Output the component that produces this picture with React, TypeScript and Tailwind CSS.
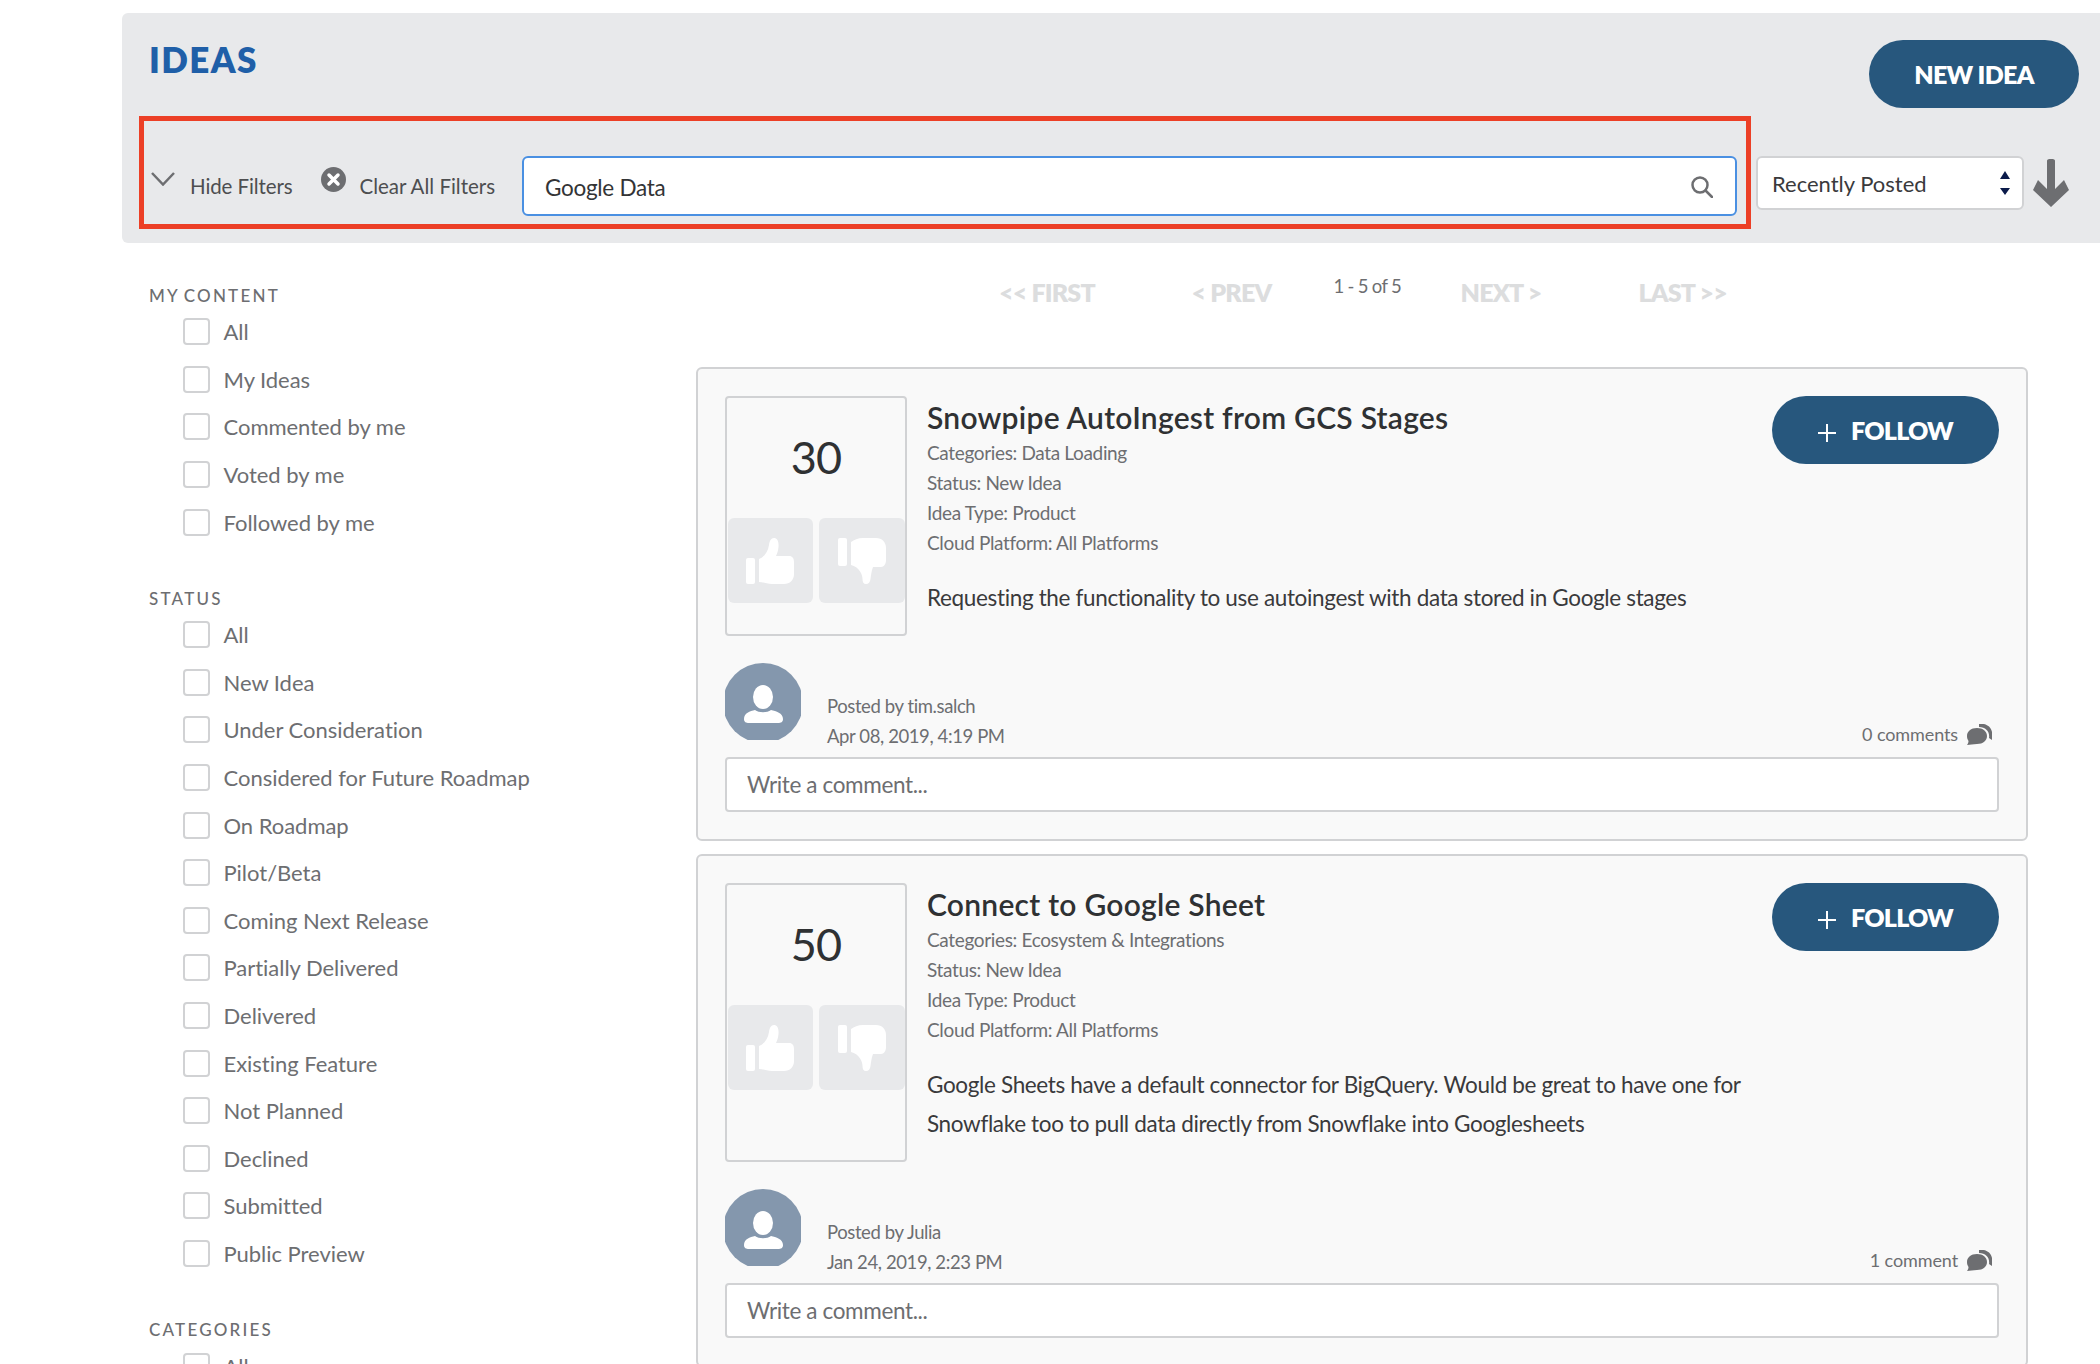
const myContent = ["All", "My Ideas", "Commented by me", "Voted by me", "Followed by me"];

const statuses = [
    "All",
    "New Idea",
    "Under Consideration",
    "Considered for Future Roadmap",
    "On Roadmap",
    "Pilot/Beta",
    "Coming Next Release",
    "Partially Delivered",
    "Delivered",
    "Existing Feature",
    "Not Planned",
    "Declined",
    "Submitted",
    "Public Preview",
];

const ideas = [
    {
        id: 1,
        votes: 30,
        title: "Snowpipe AutoIngest from GCS Stages",
        category: "Data Loading",
        body: ["Requesting the functionality to use autoingest with data stored in Google stages"],
        author: "tim.salch",
        date: "Apr 08, 2019, 4:19 PM",
        comments: "0 comments",
    },
    {
        id: 2,
        votes: 50,
        title: "Connect to Google Sheet",
        category: "Ecosystem & Integrations",
        body: [
            "Google Sheets have a default connector for BigQuery. Would be great to have one for",
            "Snowflake too to pull data directly from Snowflake into Googlesheets",
        ],
        author: "Julia",
        date: "Jan 24, 2019, 2:23 PM",
        comments: "1 comment",
    },
];

function FilterGroup({ title, items }: { title: string; items: string[] }) {
    return (
        <section className="mb-[41px]">
            <h3 className="h-[24px] text-[17px] leading-[24px] tracking-[2.2px] [word-spacing:-2px] text-[#6d6e71] font-medium">{title}</h3>
            {items.map((item) => (
                <label key={item} className="flex h-[47.6px] items-center pl-[34px]">
                    <span className="h-[27px] w-[27px] rounded-[4px] border-2 border-[#d1d2d4] bg-white" />
                    <span className="ml-[13.500px] text-[22px] tracking-[-0.03px] text-[#6d6e71]">{item}</span>
                </label>
            ))}
        </section>
    );
}

function ThumbUp() {
    return (
        <svg viewBox="0 0 48 46" className="h-[46px] w-[48px]" fill="white">
            <rect x="0" y="20" width="9" height="26" rx="2" />
            <path d="M13 21 C18 19 22 14 23 7 C23.500 3 25 0 28 0 C31 0 33 3 32.500 9 C32.200 13 31 16 30 18 L43 18 C46.500 18 48 20.500 48 24 L48 36 C48 42 44 46 38 46 L26 46 C21 46 18 44 13 44 Z" />
        </svg>
    );
}

function ThumbDown() {
    return (
        <svg viewBox="0 0 48 46" className="h-[46px] w-[48px]" fill="white">
            <rect x="0" y="0" width="9" height="28" rx="2" />
            <path d="M13 4 C16 2 20 0 25 0 L38 0 C44 0 48 4 48 10 L48 22 C48 26 46 29 43 29 L35 29 C33.500 33 33 37 32.500 41 C32.200 44 30.500 46 28 46 C25.500 46 24.500 44 24.500 41 C24.500 36 21 29 13 27 Z" />
        </svg>
    );
}

function CommentsIcon() {
    return (
        <svg viewBox="0 0 25 21" className="h-[21px] w-[25px]" fill="#6d6e71">
            <path d="M12 0 C18 -1 24 2 25 8 C25 11 25 13 25 16 L22 14 C23 8 19 3 12 3 Z" />
            <path d="M10 4 C16 4 20 7.500 20 12 C20 16.500 16 20 10 20 C6 20 3 21 0 21 C1 20 1.500 18 1.500 17 C0.500 15.500 0 14 0 12 C0 7.500 4 4 10 4 Z" />
        </svg>
    );
}

function IdeaCard({ idea }: { idea: (typeof ideas)[number] }) {
    return (
        <article className="mb-[13px] rounded-[6px] border-2 border-[#d1d2d4] bg-[#f9f9f9] p-[27px]">
            <div className="flex">
                <div className="flex w-[182px] shrink-0 flex-col rounded-[4px] border-2 border-[#d1d2d4] px-[0.5px]">
                    <div className="flex h-[120px] items-center justify-center text-[45px] tracking-[-0.8px] text-[#2f3133]">{idea.votes}</div>
                    <div className="flex justify-between">
                        <div className="flex h-[85px] w-[85px] items-center justify-center rounded-[6px] bg-[#e8e9eb]">
                            <ThumbUp />
                        </div>
                        <div className="flex h-[85px] w-[86px] items-center justify-center rounded-[6px] bg-[#e8e9eb]">
                            <ThumbDown />
                        </div>
                    </div>
                </div>
                <div className="ml-[20px] flex-1 pb-[19px]">
                    <h2 className="h-[42px] text-[30px] leading-[42px] font-semibold tracking-[0.25px] text-[#2f3133]">{idea.title}</h2>
                    <div className="text-[19px] leading-[30px] tracking-[-0.35px] text-[#6d6e71]">
                        <p>Categories: {idea.category}</p>
                        <p>Status: New Idea</p>
                        <p>Idea Type: Product</p>
                        <p>Cloud Platform: All Platforms</p>
                    </div>
                    <div className="mt-[20px] text-[22.500px] leading-[39px] tracking-[-0.35px] text-[#3a3a3c]">
                        {idea.body.map((line) => (
                            <p key={line}>{line}</p>
                        ))}
                    </div>
                </div>
                <button className="flex h-[68px] w-[227px] shrink-0 items-center justify-center gap-[15px] rounded-full bg-[#27577d] text-[25px] font-extrabold tracking-[-0.8px] text-white">
                    <svg viewBox="0 0 18 18" className="mt-[6px] h-[18px] w-[18px]" stroke="white" strokeWidth="2">
                        <path d="M9 0 V18 M0 9 H18" />
                    </svg>
                    <span className="mt-[2px]">FOLLOW</span>
                </button>
            </div>
            <div className="mt-[27px] flex h-[94px]">
                <svg viewBox="0 0 76 77" className="h-[77px] w-[76px]">
                    <circle cx="38" cy="40" r="40" fill="#8497ad" />
                    <ellipse cx="38" cy="34" rx="10" ry="12" fill="white" />
                    <path d="M19 56 C19 50 25 48 30 47 C34 50 42 50 46 47 C51 48 58 50 58 56 C58 59 56 60 53 60 L24 60 C21 60 19 59 19 56 Z" fill="white" />
                </svg>
                <div className="ml-[26px] mt-[28px] text-[18.500px] leading-[30px] tracking-[-0.4px] text-[#6d6e71]">
                    <p>Posted by {idea.author}</p>
                    <p>{idea.date}</p>
                </div>
                <div className="ml-auto mr-[7px] mt-[59px] flex h-[24px] items-center gap-[9px] text-[18px] tracking-[-0.1px] text-[#6d6e71]">
                    {idea.comments}
                    <CommentsIcon />
                </div>
            </div>
            <div className="flex h-[55px] items-center rounded-[4px] border-2 border-[#d1d2d4] bg-white pl-[20px] text-[22.500px] tracking-[-0.37px] text-[#6d6e71]">
                Write a comment...
            </div>
        </article>
    );
}

export default function App() {
    return (
        <div className="h-[1364px] overflow-hidden bg-white pt-[13px] font-['Lato','Liberation_Sans',sans-serif]">
            <header className="ml-[122px] h-[230px] rounded-l-[6px] bg-[#e8e9eb]">
                <div className="flex h-[103px] items-start justify-between pl-[27px] pr-[21px]">
                    <h1 className="mt-[25px] text-[35px] leading-[42px] font-extrabold tracking-[1.4px] text-[#1f5fa8]">IDEAS</h1>
                    <button className="relative z-10 mt-[27px] h-[68px] w-[210px] rounded-full bg-[#27577d] pt-[2px] text-[25px] font-extrabold tracking-[-0.7px] text-white">
                        NEW IDEA
                    </button>
                </div>
                <div className="flex items-start pl-[17px]">
                    <div className="flex h-[113px] w-[1612px] shrink-0 items-start border-[5px] border-[#ec3f26] text-[20.500px] text-[#4d4e50]">
                        <svg viewBox="0 0 24 14" className="ml-[7px] mt-[51px] h-[14px] w-[24px]" fill="none" stroke="#6d6e71" strokeWidth="2.500">
                            <path d="M1 1 L12 12.500 L23 1" />
                        </svg>
                        <span className="ml-[15px] mt-[50px] leading-[30px] tracking-[-0.1px]">Hide Filters</span>
                        <svg viewBox="0 0 25 25" className="ml-[29px] mt-[46px] h-[25px] w-[25px]">
                            <circle cx="12.500" cy="12.500" r="12.500" fill="#6d6e71" />
                            <path d="M8 8 L17 17 M17 8 L8 17" stroke="white" strokeWidth="3.500" strokeLinecap="round" />
                        </svg>
                        <span className="ml-[13px] mt-[50px] leading-[30px]">Clear All Filters</span>
                        <div className="ml-[27px] mt-[35px] flex h-[60px] w-[1215px] items-center rounded-[6px] border-2 border-[#4a90e2] bg-white pl-[21px] pr-[22px] text-[22.500px] text-[#333436]">
                            <span className="mt-[4px] tracking-[-0.3px]">Google Data</span>
                            <svg viewBox="0 0 22 22" className="ml-auto mt-[2px] h-[22px] w-[22px]" fill="none" stroke="#6d6e71" strokeWidth="2.500">
                                <circle cx="9" cy="9" r="7.500" />
                                <path d="M14.500 14.500 L21 21" strokeLinecap="round" />
                            </svg>
                        </div>
                    </div>
                    <div className="ml-[5px] mt-[40px] flex h-[54px] w-[268px] items-center rounded-[6px] border-2 border-[#d1d2d4] bg-white pl-[14px] text-[22px] text-[#3a3a3c]">
                        <span>Recently Posted</span>
                        <svg viewBox="0 0 10 24" className="ml-auto mr-[12px] h-[24px] w-[10px]" fill="#0b1b4a">
                            <path d="M5 0 L10 8 H0 Z M0 17 H10 L5 24 Z" />
                        </svg>
                    </div>
                    <svg viewBox="0 0 36 48" className="ml-[9px] mt-[43px] h-[48px] w-[36px]" fill="#6d6e71">
                        <path d="M14 2 C14 0.500 15 0 18 0 C21 0 22 0.500 22 2 L22 30 L31 21 L36 31 L18 48 L0 31 L5 21 L14 30 Z" />
                    </svg>
                </div>
            </header>
            <div className="flex">
                <aside className="w-[696px] shrink-0 pl-[149px] pt-[41px]">
                    <FilterGroup title="MY CONTENT" items={myContent} />
                    <FilterGroup title="STATUS" items={statuses} />
                    <FilterGroup title="CATEGORIES" items={["All"]} />
                </aside>
                <main className="w-[1332px] shrink-0">
                    <div className="flex h-[124px] items-start pl-[303px] pt-[32px] text-[25px] leading-[34px] font-extrabold tracking-[-0.8px] text-[#dcddde]">
                        <span className="w-[192.500px]">&lt;&lt; FIRST</span>
                        <span className="w-[142px]">&lt; PREV</span>
                        <span className="-mt-[6px] w-[127px] text-[18.500px] font-normal tracking-[-0.7px] text-[#6d6e71]">1 - 5 of 5</span>
                        <span className="w-[178px]">NEXT &gt;</span>
                        <span>LAST &gt;&gt;</span>
                    </div>
                    {ideas.map((idea) => (
                        <IdeaCard key={idea.id} idea={idea} />
                    ))}
                </main>
            </div>
        </div>
    );
}
